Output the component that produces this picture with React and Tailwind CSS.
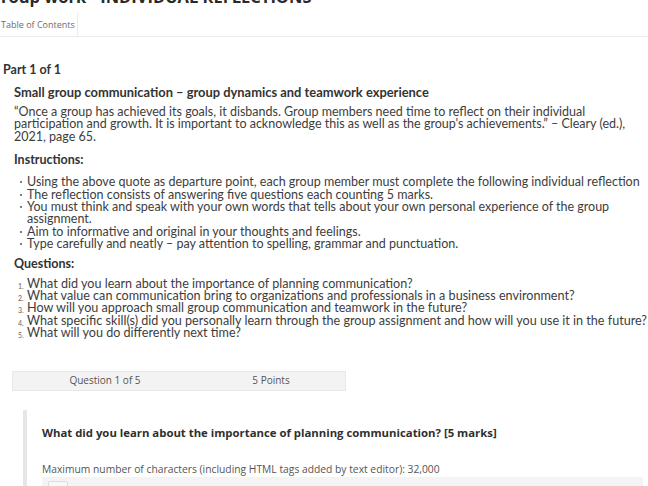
import React from "react";

export default function App() {
  const bullets = [
    "Using the above quote as departure point, each group member must complete the following individual reflection",
    "The reflection consists of answering five questions each counting 5 marks.",
    "You must think and speak with your own words that tells about your own personal experience of the group assignment.",
    "Aim to informative and original in your thoughts and feelings.",
    "Type carefully and neatly – pay attention to spelling, grammar and punctuation.",
  ];
  const questions = [
    "What did you learn about the importance of planning communication?",
    "What value can communication bring to organizations and professionals in a business environment?",
    "How will you approach small group communication and teamwork in the future?",
    "What specific skill(s) did you personally learn through the group assignment and how will you use it in the future?",
    "What will you do differently next time?",
  ];
  return (
    <div className="w-[648px] h-[486px] overflow-hidden bg-white text-[#3d3d3d] font-['Lato',sans-serif]">
      <div className="-mt-[13px] -ml-[11px] whitespace-nowrap text-[16.5px] font-bold leading-[19px] text-[#2a2a2a] font-['Open_Sans',sans-serif]">
        Group work - INDIVIDUAL REFLECTIONS
      </div>
      <div className="mt-[7px] flex border-b border-[#ececec] h-[24px]">
        <div className="w-[78px] border-r border-[#ececec] pl-[1px] text-[9px] leading-[24px] text-[#6b6b6b] font-['Open_Sans',sans-serif]">
          Table of Contents
        </div>
      </div>
      <div className="mt-[26px] pl-[3px] text-[12.5px] font-bold leading-[14px] text-[#333]">Part 1 of 1</div>
      <div className="pl-[14px] pr-[4px]">
        <div className="mt-[8px] text-[12.9px] font-bold leading-[14px] text-[#333]">
          Small group communication – group dynamics and teamwork experience
        </div>
        <p className="mt-[7px] text-[12.5px] leading-[12.4px]">
          “Once a group has achieved its goals, it disbands. Group members need time to reflect on their individual participation and growth. It is important to acknowledge this as well as the group's achievements.” – Cleary (ed.), 2021, page 65.
        </p>
        <div className="mt-[10px] text-[12.5px] font-bold leading-[14px] text-[#333]">Instructions:</div>
        <ul className="mt-[9px] pl-[13px]">
          {bullets.map((b, i) => (
            <li key={i} className="relative text-[12.5px] leading-[12.4px] whitespace-normal">
              <span className="absolute -left-[7px] top-[5px] w-[2px] h-[2px] rounded-full bg-[#555]" />
              <span className={i === 0 ? "whitespace-nowrap" : ""}>{b}</span>
            </li>
          ))}
        </ul>
        <div className="mt-[6px] text-[12.5px] font-bold leading-[14px] text-[#333]">Questions:</div>
        <ol className="mt-[7px] pl-[13px]">
          {questions.map((q, i) => (
            <li key={i} className="relative text-[12.6px] leading-[12.4px] whitespace-nowrap">
              <span className="absolute -left-[9px] top-[2px] text-[7px] text-[#666]">{i + 1}.</span>
              {q}
            </li>
          ))}
        </ol>
      </div>
      <div className="mt-[31px] ml-[12px] w-[334px] h-[20px] flex items-center bg-[#f3f3f3] border border-[#e8e8e8] text-[10px] text-[#555] font-['Open_Sans',sans-serif]">
        <div className="w-[184px] text-center">Question 1 of 5</div>
        <div className="w-[148px] text-center">5 Points</div>
      </div>
      <div className="mt-[19px] ml-[23px] border-l-[4px] border-[#e6e6e6] pl-[15px] pt-[16px] h-[100px]">
        <div className="text-[11.35px] font-bold leading-[14px] text-[#2f2f2f] font-['Open_Sans',sans-serif]">
          What did you learn about the importance of planning communication? [5 marks]
        </div>
        <div className="mt-[23px] text-[10.3px] leading-[12px] text-[#555] font-['Open_Sans',sans-serif]">
          Maximum number of characters (including HTML tags added by text editor): 32,000
        </div>
        <div className="mt-[2px] w-[601px] h-[40px] bg-[#f4f4f4] pl-[6px] pt-[4px]">
          <div className="w-[20px] h-[20px] border border-[#dcdcdc] rounded-[2px] bg-[#f8f8f8]" />
        </div>
      </div>
    </div>
  );
}
